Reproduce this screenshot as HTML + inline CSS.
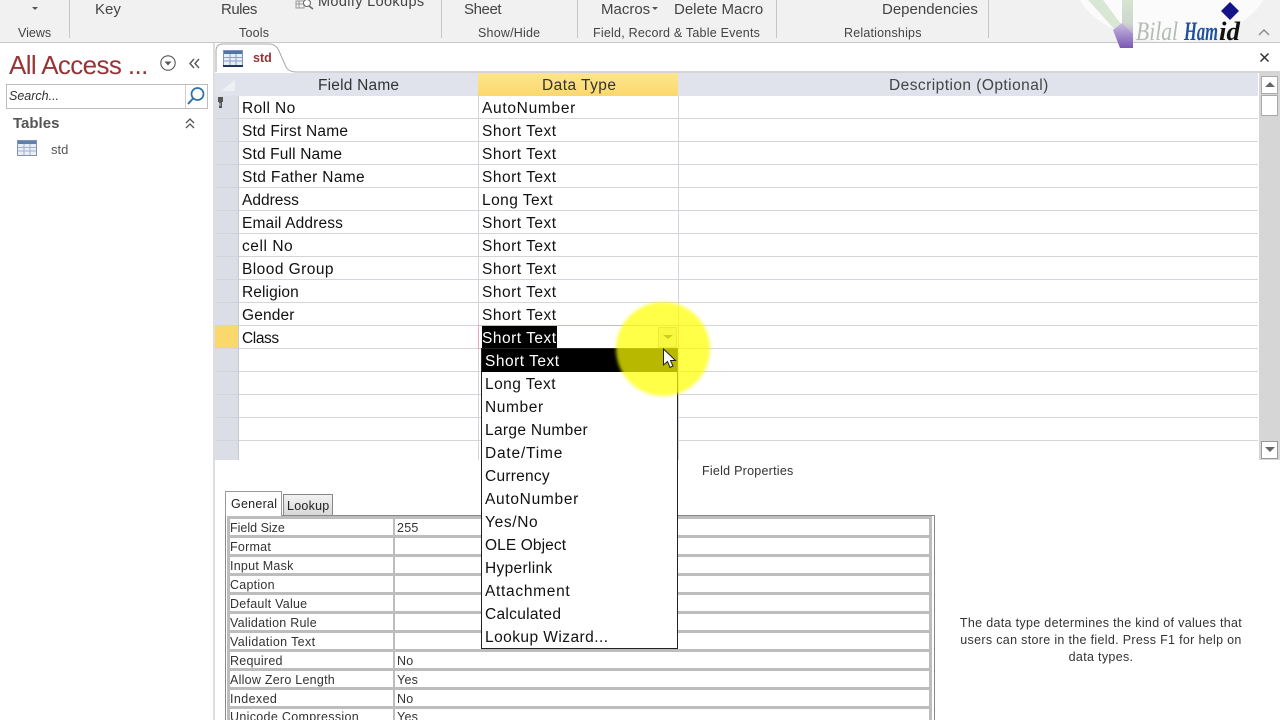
<!DOCTYPE html>
<html><head><meta charset="utf-8"><style>
html,body{margin:0;padding:0;width:1280px;height:720px;overflow:hidden;background:#fff}
body{position:relative;font-family:"Liberation Sans",sans-serif;color:#222}
div,span{position:absolute}
.t{white-space:nowrap;line-height:1}
.r{font-size:15px;color:#444;margin-top:1px}
.g{font-size:12.5px;color:#444;margin-top:1px;letter-spacing:.2px}
.c{font-size:15.5px;color:#111;margin-top:1px}
.l{background:#d4d4da;height:1px}
.p{font-size:12.5px;color:#333;margin-top:1px;letter-spacing:.25px}
.h{height:3px;background:#bdbdbd;left:227px;width:705px}
</style></head><body>

<!-- ribbon -->
<div style="left:0;top:0;width:1280px;height:42px;background:#f1f1f1"></div>
<div style="left:0;top:42px;width:1280px;height:1px;background:#c8c8c8"></div>
<div style="left:69px;top:0;width:1px;height:38px;background:#c6c6c6"></div>
<div style="left:441px;top:0;width:1px;height:38px;background:#c6c6c6"></div>
<div style="left:577px;top:0;width:1px;height:38px;background:#c6c6c6"></div>
<div style="left:776px;top:0;width:1px;height:38px;background:#c6c6c6"></div>
<div style="left:988px;top:0;width:1px;height:38px;background:#c6c6c6"></div>
<div style="left:32px;top:7px;width:0;height:0;border-left:3px solid transparent;border-right:3px solid transparent;border-top:3px solid #555"></div>
<span class="t r" style="left:95px;top:1px">Key</span>
<span class="t r" style="left:221px;top:1px;letter-spacing:-.5px">Rules</span>
<span class="t r" style="left:318px;top:-6px;font-size:14.5px;letter-spacing:.35px">Modify Lookups</span>
<svg style="position:absolute;left:295px;top:0" width="20" height="10"><path d="M1 1h8v7H1zM1 4h8M4 1v7" fill="none" stroke="#999"/><circle cx="12" cy="3" r="3.5" fill="#fff" stroke="#666"/><path d="M14 6l4 3" stroke="#666" stroke-width="1.5"/></svg>
<span class="t r" style="left:464px;top:1px;letter-spacing:-.4px">Sheet</span>
<span class="t r" style="left:601px;top:1px">Macros</span>
<div style="left:652px;top:7px;width:0;height:0;border-left:3px solid transparent;border-right:3px solid transparent;border-top:3px solid #555"></div>
<span class="t r" style="left:674px;top:1px">Delete Macro</span>
<span class="t r" style="left:882px;top:1px">Dependencies</span>
<span class="t g" style="left:18px;top:26px;letter-spacing:0">Views</span>
<span class="t g" style="left:239px;top:26px">Tools</span>
<span class="t g" style="left:478px;top:26px">Show/Hide</span>
<span class="t g" style="left:593px;top:26px;letter-spacing:.22px">Field, Record &amp; Table Events</span>
<span class="t g" style="left:844px;top:26px">Relationships</span>

<!-- logo -->
<div style="left:1073px;top:-90px;width:197px;height:132px;background:#fbfbfb;border-radius:50%"></div>
<svg style="position:absolute;left:1080px;top:0" width="180" height="48">
<defs><linearGradient id="v" x1="0" y1="0" x2="0" y2="1"><stop offset="0" stop-color="#d6e4d2"/><stop offset=".5" stop-color="#cdd6cc"/><stop offset=".7" stop-color="#b8a6d6"/><stop offset="1" stop-color="#7c5cb8"/></linearGradient><linearGradient id="w" x1="0" y1="0" x2="0" y2="1"><stop offset="0" stop-color="#c9bde0"/><stop offset="1" stop-color="#7b58b6"/></linearGradient></defs>
<path d="M8 0H23L41 24 37 32Z" fill="#d8e6d4"/>
<path d="M42 0H53V48H42Z" fill="url(#v)"/>
<path d="M33 30L42 23 53 34V48H40Z" fill="url(#w)"/>
<path d="M150 2L159 11 150 20 141 11Z" fill="#13138a"/>
<text x="56" y="40" font-family="Liberation Serif,serif" font-style="italic" font-size="26" fill="#b4bab4" textLength="42" lengthAdjust="spacingAndGlyphs">Bilal</text>
<text x="104" y="40" font-family="Liberation Serif,serif" font-style="italic" font-weight="bold" font-size="26" fill="#1e4fa0" textLength="34" lengthAdjust="spacingAndGlyphs">Ham</text>
<text x="139" y="40" font-family="Liberation Serif,serif" font-style="italic" font-weight="bold" font-size="26" fill="#111" textLength="21" lengthAdjust="spacingAndGlyphs">id</text>
</svg>
<svg style="position:absolute;left:1258px;top:28px" width="12" height="8"><path d="M1 7l5-5 5 5" fill="none" stroke="#888" stroke-width="1.4"/></svg>

<!-- nav pane -->
<div style="left:213px;top:43px;width:2px;height:677px;background:#dedede"></div>
<span class="t" style="left:9px;top:52px;font-size:26px;letter-spacing:-.62px;color:#973437">All Access ...</span>
<svg style="position:absolute;left:159px;top:54px" width="18" height="18"><circle cx="9" cy="9" r="7.2" fill="none" stroke="#555" stroke-width="1.1"/><path d="M5.5 7.5h7L9 11.5z" fill="#555"/></svg>
<svg style="position:absolute;left:188px;top:58px" width="13" height="11"><path d="M6 1L2 5.5 6 10M11 1L7 5.5 11 10" fill="none" stroke="#555" stroke-width="1.4"/></svg>
<div style="left:6px;top:84px;width:200px;height:23px;border:1px solid #bdbdbd;box-sizing:content-box"></div>
<div style="left:185px;top:85px;width:1px;height:23px;background:#cfcfcf"></div>
<span class="t" style="left:9px;top:90px;font-size:12.5px;font-style:italic;color:#333">Search...</span>
<svg style="position:absolute;left:186px;top:86px" width="20" height="20"><circle cx="11.5" cy="8" r="6" fill="none" stroke="#2c72a8" stroke-width="1.7"/><path d="M7 12.5L2 18" stroke="#2c72a8" stroke-width="2"/></svg>
<span class="t" style="left:13px;top:116px;font-size:15px;font-weight:bold;color:#555">Tables</span>
<svg style="position:absolute;left:184px;top:118px" width="12" height="12"><path d="M2 5l4-4 4 4M2 10l4-4 4 4" fill="none" stroke="#555" stroke-width="1.3"/></svg>
<svg style="position:absolute;left:17px;top:140px" width="20" height="16"><rect x=".5" y=".5" width="19" height="15" fill="#e8edf6" stroke="#7f93b5"/><rect x="1" y="1" width="18" height="3" fill="#5f7fae"/><path d="M1 7.5h18M1 11h18M7 4v11M13 4v11" stroke="#9fb2cf"/></svg>
<span class="t" style="left:51px;top:143px;font-size:13px;color:#555">std</span>

<!-- doc tab -->
<svg style="position:absolute;left:215px;top:43px" width="1065" height="31"><path d="M1 29V8Q1 1 8 1H54Q61 1 64 8L71 24Q74 29 81 29H1065" fill="#fff" stroke="#a8a8a8"/></svg>
<svg style="position:absolute;left:223px;top:50px" width="21" height="18"><rect x=".5" y=".5" width="19" height="16" fill="#e8edf6" stroke="#7f93b5"/><rect x="1" y="1" width="18" height="3" fill="#4f75ab"/><rect x="0" y="15" width="20" height="2" fill="#22365c"/><path d="M1 7.5h18M1 11h18M7 4v11M13 4v11" stroke="#8aa0c4"/></svg>
<span class="t" style="left:253px;top:52px;font-size:12.5px;font-weight:bold;color:#973437">std</span>
<svg style="position:absolute;left:1259px;top:52px" width="12" height="12"><path d="M1.5 1.5l8 8M9.5 1.5l-8 8" stroke="#333" stroke-width="1.5"/></svg>

<!-- grid headers -->
<div style="left:215px;top:73px;width:1043px;height:23px;background:#e0e3ec"></div>
<div style="left:478px;top:73px;width:200px;height:23px;background:linear-gradient(#fde58f,#fbd86c)"></div>
<div style="left:215px;top:96px;width:23px;height:364px;background:#dbdee7"></div>
<svg style="position:absolute;left:222px;top:78px" width="14" height="14"><path d="M0 13L13 1V13Z" fill="#eef0f4"/></svg>
<span class="t c" style="left:318px;top:77px;color:#333;letter-spacing:.2px">Field Name</span>
<span class="t c" style="left:542px;top:77px;color:#333;letter-spacing:.45px">Data Type</span>
<span class="t c" style="left:889px;top:77px;color:#444;letter-spacing:.45px">Description (Optional)</span>

<!-- row lines -->
<div class="l" style="left:215px;top:118px;width:1043px"></div>
<div class="l" style="left:215px;top:141px;width:1043px"></div>
<div class="l" style="left:215px;top:164px;width:1043px"></div>
<div class="l" style="left:215px;top:187px;width:1043px"></div>
<div class="l" style="left:215px;top:210px;width:1043px"></div>
<div class="l" style="left:215px;top:233px;width:1043px"></div>
<div class="l" style="left:215px;top:256px;width:1043px"></div>
<div class="l" style="left:215px;top:279px;width:1043px"></div>
<div class="l" style="left:215px;top:302px;width:1043px"></div>
<div class="l" style="left:215px;top:325px;width:1043px"></div>
<div class="l" style="left:215px;top:348px;width:1043px"></div>
<div class="l" style="left:215px;top:371px;width:1043px"></div>
<div class="l" style="left:215px;top:394px;width:1043px"></div>
<div class="l" style="left:215px;top:417px;width:1043px"></div>
<div class="l" style="left:215px;top:440px;width:1043px"></div>
<div style="left:238px;top:96px;width:1px;height:364px;background:#c8c8cf"></div>
<div style="left:478px;top:96px;width:1px;height:364px;background:#d4d4da"></div>
<div style="left:678px;top:96px;width:1px;height:364px;background:#d4d4da"></div>
<div style="left:215px;top:326px;width:23px;height:22px;background:#fbd86c"></div>

<!-- key icon -->
<svg style="position:absolute;left:217px;top:96px" width="8" height="14"><path d="M1 1h5v5H5v6H2V6H1z" fill="#555"/><path d="M3 7v3" stroke="#ddd"/></svg>

<!-- field names -->
<span class="t c" style="left:242px;top:100px;letter-spacing:.4px">Roll No</span>
<span class="t c" style="left:242px;top:123px;letter-spacing:.2px">Std First Name</span>
<span class="t c" style="left:242px;top:146px;letter-spacing:.15px">Std Full Name</span>
<span class="t c" style="left:242px;top:169px;letter-spacing:.33px">Std Father Name</span>
<span class="t c" style="left:242px;top:192px">Address</span>
<span class="t c" style="left:242px;top:215px;letter-spacing:.15px">Email Address</span>
<span class="t c" style="left:242px;top:238px;letter-spacing:.55px">cell No</span>
<span class="t c" style="left:242px;top:261px;letter-spacing:.45px">Blood Group</span>
<span class="t c" style="left:242px;top:284px;letter-spacing:.1px">Religion</span>
<span class="t c" style="left:242px;top:307px;letter-spacing:.15px">Gender</span>
<span class="t c" style="left:242px;top:330px;letter-spacing:-.4px">Class</span>
<!-- types -->
<span class="t c" style="left:482px;top:100px;letter-spacing:.7px">AutoNumber</span>
<span class="t c" style="left:482px;top:123px;letter-spacing:.5px">Short Text</span>
<span class="t c" style="left:482px;top:146px;letter-spacing:.5px">Short Text</span>
<span class="t c" style="left:482px;top:169px;letter-spacing:.5px">Short Text</span>
<span class="t c" style="left:482px;top:192px;letter-spacing:.45px">Long Text</span>
<span class="t c" style="left:482px;top:215px;letter-spacing:.5px">Short Text</span>
<span class="t c" style="left:482px;top:238px;letter-spacing:.5px">Short Text</span>
<span class="t c" style="left:482px;top:261px;letter-spacing:.5px">Short Text</span>
<span class="t c" style="left:482px;top:284px;letter-spacing:.5px">Short Text</span>
<span class="t c" style="left:482px;top:307px;letter-spacing:.5px">Short Text</span>

<!-- scrollbar -->
<div style="left:1259px;top:73px;width:21px;height:387px;background:#d6d6d6"></div>
<div style="left:1261px;top:76px;width:17px;height:18px;background:#fff;border:1px solid #aaa;box-sizing:border-box"></div>
<div style="left:1265px;top:82px;width:0;height:0;border-left:5px solid transparent;border-right:5px solid transparent;border-bottom:5px solid #666"></div>
<div style="left:1261px;top:95px;width:17px;height:21px;background:#fff;border:1px solid #aaa;box-sizing:border-box"></div>
<div style="left:1261px;top:441px;width:17px;height:18px;background:#fff;border:1px solid #999;box-sizing:border-box"></div>
<div style="left:1265px;top:447px;width:0;height:0;border-left:5px solid transparent;border-right:5px solid transparent;border-top:5px solid #666"></div>

<!-- properties -->
<span class="t p" style="left:702px;top:464px;color:#333">Field Properties</span>
<div style="left:225px;top:515px;width:710px;height:205px;border:1px solid #888;border-bottom:0;box-sizing:border-box;background:#fff"></div>
<div style="left:225px;top:491px;width:57px;height:25px;background:#fff;border:1px solid #999;border-bottom:0;box-sizing:border-box"></div>
<div style="left:283px;top:494px;width:50px;height:21px;background:linear-gradient(#f2f2f2,#d8d8d8);border:1px solid #888;border-bottom:0;box-sizing:border-box"></div>
<span class="t p" style="left:231px;top:497px;color:#222">General</span>
<span class="t p" style="left:287px;top:499px;color:#222">Lookup</span>
<div style="left:227px;top:517px;width:3px;height:203px;background:#bdbdbd"></div>
<div style="left:393px;top:517px;width:2px;height:203px;background:#bdbdbd"></div>
<div style="left:929px;top:517px;width:3px;height:203px;background:#bdbdbd"></div>
<div class="h" style="top:516px"></div>
<div class="h" style="top:535px"></div>
<div class="h" style="top:554px"></div>
<div class="h" style="top:573px"></div>
<div class="h" style="top:592px"></div>
<div class="h" style="top:611px"></div>
<div class="h" style="top:630px"></div>
<div class="h" style="top:649px"></div>
<div class="h" style="top:668px"></div>
<div class="h" style="top:687px"></div>
<div class="h" style="top:706px"></div>
<span class="t p" style="left:230px;top:521px;letter-spacing:0">Field Size</span>
<span class="t p" style="left:230px;top:540px">Format</span>
<span class="t p" style="left:230px;top:559px">Input Mask</span>
<span class="t p" style="left:230px;top:578px">Caption</span>
<span class="t p" style="left:230px;top:597px">Default Value</span>
<span class="t p" style="left:230px;top:616px">Validation Rule</span>
<span class="t p" style="left:230px;top:635px;letter-spacing:.35px">Validation Text</span>
<span class="t p" style="left:230px;top:654px">Required</span>
<span class="t p" style="left:230px;top:673px">Allow Zero Length</span>
<span class="t p" style="left:230px;top:692px;letter-spacing:.4px">Indexed</span>
<span class="t p" style="left:230px;top:710px;letter-spacing:.32px">Unicode Compression</span>
<span class="t p" style="left:397px;top:521px">255</span>
<span class="t p" style="left:397px;top:654px">No</span>
<span class="t p" style="left:397px;top:673px">Yes</span>
<span class="t p" style="left:397px;top:692px">No</span>
<span class="t p" style="left:397px;top:710px">Yes</span>
<div style="left:940px;top:615px;width:322px;text-align:center;font-size:12.5px;line-height:17px;color:#333;letter-spacing:.32px">The data type determines the kind of values that<br>users can store in the field. Press F1 for help on<br>data types.</div>

<!-- active cell -->
<div style="left:478px;top:325px;width:201px;height:24px;border:1px solid #f0a8b6;box-sizing:border-box"></div>
<div style="left:482px;top:326px;width:75px;height:23px;background:#000"></div>
<span class="t c" style="left:482px;top:330px;color:#fff;letter-spacing:.5px">Short Text</span>
<div style="left:658px;top:327px;width:19px;height:21px;background:#e4e4e4;border:1px solid #bbb;box-sizing:border-box"></div>
<div style="left:663px;top:335px;width:0;height:0;border-left:5px solid transparent;border-right:5px solid transparent;border-top:4px solid #555"></div>

<!-- dropdown -->
<div style="left:481px;top:348px;width:197px;height:301px;background:#fff;border:1px solid #222;box-sizing:border-box"></div>
<div style="left:482px;top:349px;width:195px;height:23px;background:#000"></div>
<span class="t c" style="left:485px;top:353px;color:#fff;letter-spacing:.5px">Short Text</span>
<span class="t c" style="left:485px;top:376px;letter-spacing:.45px">Long Text</span>
<span class="t c" style="left:485px;top:399px;letter-spacing:.6px">Number</span>
<span class="t c" style="left:485px;top:422px;letter-spacing:.33px">Large Number</span>
<span class="t c" style="left:485px;top:445px;letter-spacing:.8px">Date/Time</span>
<span class="t c" style="left:485px;top:468px;letter-spacing:.25px">Currency</span>
<span class="t c" style="left:485px;top:491px;letter-spacing:.7px">AutoNumber</span>
<span class="t c" style="left:485px;top:514px;letter-spacing:.65px">Yes/No</span>
<span class="t c" style="left:485px;top:537px;letter-spacing:.1px">OLE Object</span>
<span class="t c" style="left:485px;top:560px;letter-spacing:.33px">Hyperlink</span>
<span class="t c" style="left:485px;top:583px;letter-spacing:.7px">Attachment</span>
<span class="t c" style="left:485px;top:606px;letter-spacing:.3px">Calculated</span>
<span class="t c" style="left:485px;top:629px;letter-spacing:.45px">Lookup Wizard...</span>

<!-- yellow highlight + cursor -->
<div style="left:616px;top:302px;width:94px;height:94px;border-radius:50%;background:rgba(255,255,0,.72);filter:blur(1.5px)"></div>
<svg style="position:absolute;left:662px;top:348px" width="16" height="22"><path d="M1.5 1V17L5.5 13.5 8 19.5 11 18 8.5 12.5H13.5Z" fill="#fff" stroke="#222"/></svg>
</body></html>
